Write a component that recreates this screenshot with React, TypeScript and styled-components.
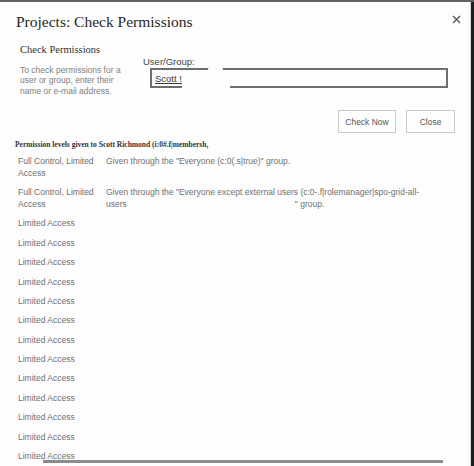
import React from "react";
import styled, { createGlobalStyle } from "styled-components";

const GlobalStyle = createGlobalStyle`
  html, body {
    margin: 0;
    padding: 0;
    background: #fdfdfd;
  }
  body {
    width: 474px;
    height: 466px;
    overflow: hidden;
    font-family: "Liberation Sans", Arial, sans-serif;
  }
`;

function App() {
  // rows of the permission table (built here so the styled parts below exist)
  const levels = [
    {
      level: (
        <>
          Full Control, Limited
          <br />
          Access
        </>
      ),
      how: <>Given through the "Everyone (c:0(.s|true)" group.</>,
    },
    {
      level: (
        <>
          Full Control, Limited
          <br />
          Access
        </>
      ),
      how: (
        <>
          Given through the "Everyone except external users (c:0-.f|rolemanager|spo-grid-all-
          <br />
          users<Redacted $width={168} />" group.
        </>
      ),
    },
    ...Array.from({ length: 13 }, () => ({ level: <>Limited Access</>, how: null })),
  ];

  return (
    <>
      <GlobalStyle />
      <Window>
        <Dialog>
          <Header>
            <Title>Projects: Check Permissions</Title>
            <CloseButton aria-label="Close">
              <svg width="9" height="9" viewBox="0 0 9 9">
                <path d="M1 1 L8 8 M8 1 L1 8" stroke="#555" strokeWidth="1.4" />
              </svg>
            </CloseButton>
          </Header>

          <TopSection>
            <div>
              <SubHeading>Check Permissions</SubHeading>
              <Description>
                To check permissions for a
                <br />
                user or group, enter their
                <br />
                name or e-mail address.
              </Description>
            </div>
            <UserColumn>
              <Label>User/Group:</Label>
              <InputBox>
                <UserName>Scott !</UserName>
                <Smudge $left={30} $top={2} $width={48} $height={19} />
                <Smudge $left={56} $top={-3} $width={15} $height={6} />
              </InputBox>
            </UserColumn>
          </TopSection>

          <ButtonRow>
            <Button $width={58}>Check Now</Button>
            <Button $width={49}>Close</Button>
          </ButtonRow>

          <PermHeader>Permission levels given to Scott Richmond (i:0#.f|membersh,</PermHeader>

          <Table>
            {levels.map((row, i) => (
              <Row key={i}>
                <span>{row.level}</span>
                <span>{row.how}</span>
              </Row>
            ))}
          </Table>

          <ScrollThumb />
        </Dialog>
        <Edge />
      </Window>
    </>
  );
}

const Window = styled.div`
  display: flex;
  width: 474px;
  height: 466px;
  box-sizing: border-box;
  border-top: 2px solid #626262;
  background: #fdfdfd;
  overflow: hidden;
`;

const Dialog = styled.div`
  position: relative;
  width: 471px;
  box-sizing: border-box;
  border-right: 1px solid #d4d4d4;
  display: flex;
  flex-direction: column;
  overflow: hidden;
`;

const Edge = styled.div`
  width: 3px;
  background: #1e1e1e;
`;

const Header = styled.div`
  display: flex;
  justify-content: space-between;
  padding: 10px 4px 0 16px;
`;

const Title = styled.h1`
  margin: 0;
  font-family: "Liberation Serif", "Times New Roman", serif;
  font-weight: normal;
  font-size: 15.5px;
  line-height: 20px;
  color: #262626;
`;

const CloseButton = styled.button`
  width: 20px;
  height: 20px;
  margin-top: -3px;
  padding: 0;
  border: none;
  background: none;
  display: flex;
  align-items: center;
  justify-content: center;
`;

const TopSection = styled.div`
  display: grid;
  grid-template-columns: 123px 1fr;
  margin-top: 11px;
  padding: 0 22px 0 20px;
`;

const SubHeading = styled.h2`
  margin: 0;
  font-family: "Liberation Serif", "Times New Roman", serif;
  font-weight: normal;
  font-size: 10.5px;
  line-height: 14px;
  color: #333;
`;

const Description = styled.p`
  margin: 7.5px 0 0;
  font-size: 8.5px;
  line-height: 10.9px;
  color: #808080;
  white-space: nowrap;
`;

const UserColumn = styled.div`
  padding-top: 13px;
`;

const Label = styled.div`
  font-size: 9.5px;
  line-height: 12px;
  color: #444;
`;

const InputBox = styled.div`
  position: relative;
  margin-left: 7px;
  height: 20px;
  box-sizing: border-box;
  border: 2px solid #6e6e6e;
  display: flex;
  align-items: center;
  padding-left: 3px;
`;

const UserName = styled.span`
  font-size: 9.5px;
  color: #3a3a3a;
  text-decoration: underline;
`;

// white patches where the user's name was blotted out
const Smudge = styled.div<{ $left: number; $top: number; $width: number; $height: number }>`
  position: absolute;
  left: ${(p) => p.$left}px;
  top: ${(p) => p.$top}px;
  width: ${(p) => p.$width}px;
  height: ${(p) => p.$height}px;
  background: #fdfdfd;
  border-radius: 3px;
`;

const ButtonRow = styled.div`
  display: flex;
  justify-content: flex-end;
  gap: 10px;
  margin-top: 12.8px;
  padding-right: 15px;
`;

const Button = styled.button<{ $width: number }>`
  width: ${(p) => p.$width}px;
  height: 23px;
  padding: 0;
  border: 1px solid #c9c9c9;
  background: #fdfdfd;
  font-family: "Liberation Sans", Arial, sans-serif;
  font-size: 8.5px;
  color: #555;
`;

const PermHeader = styled.div`
  margin-top: 7px;
  padding-left: 15px;
  font-family: "Liberation Serif", "Times New Roman", serif;
  font-weight: bold;
  font-size: 7.5px;
  line-height: 10px;
  color: #333;
  white-space: nowrap;
`;

const Table = styled.div`
  margin-top: 2.3px;
  padding-left: 18px;
`;

const Row = styled.div`
  display: grid;
  grid-template-columns: 88px 1fr;
  padding: 3.85px 0;
  font-size: 8.5px;
  line-height: 11.7px;
  color: #707070;
  white-space: nowrap;
`;

const Redacted = styled.span<{ $width: number }>`
  display: inline-block;
  width: ${(p) => p.$width}px;
`;

const ScrollThumb = styled.div`
  position: absolute;
  left: 43px;
  top: 458px;
  width: 400px;
  height: 3px;
  background: #8c8c8c;
`;

export default App;
